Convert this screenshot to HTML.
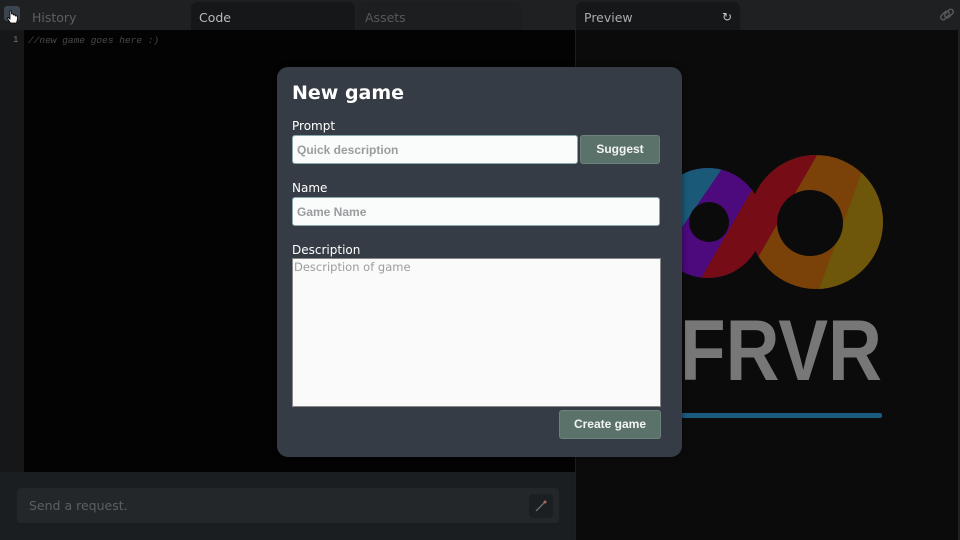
<!DOCTYPE html>
<html><head><meta charset="utf-8"><style>
*{box-sizing:border-box;margin:0;padding:0}
body{width:960px;height:540px;overflow:hidden;background:#1e1f21;font-family:"Liberation Sans","DejaVu Sans",sans-serif;position:relative}
.abs{position:absolute}
.tab{position:absolute;top:2px;height:28px;border-radius:6px 6px 0 0;font-size:12.5px;padding:8px 0 0 8px;font-family:"DejaVu Sans",sans-serif}
</style></head><body>
<div class="abs" style="left:0;top:0;width:960px;height:30px;background:#1f2022"></div>
<div class="abs" style="left:4px;top:6px;width:16px;height:15px;background:#3a4550;border-radius:3px"></div>
<svg class="abs" style="left:7px;top:10px" width="12" height="14"><path d="M3 1 v8 l-1.5-1.5 l-1 1 l3 4.5 h6 l1-4 v-3 h-2 v-1 h-2 v-1 h-2 v-3 z" fill="#fff" stroke="#000" stroke-width="0.8"/></svg>
<div class="tab" style="left:24px;width:165px;color:#5b5f63;background:#1f2022">History</div>
<div class="tab" style="left:191px;width:164px;color:#b9bcbf;background:#151719">Code</div>
<div class="tab" style="left:357px;width:165px;color:#55595d;background:#1c1e20">Assets</div>
<div class="tab" style="left:576px;width:164px;color:#a9acb0;background:#151719">Preview<span style="position:absolute;right:8px;top:8px;font-size:12px;color:#c8c8c8">↻</span></div>
<svg class="abs" style="left:938px;top:6px" width="18" height="18" viewBox="0 0 18 18"><g fill="none" stroke="#55585c" stroke-width="1.5"><rect x="2" y="7" width="10" height="5" rx="2.5" transform="rotate(-45 7 9.5)"/><rect x="6" y="5" width="10" height="5" rx="2.5" transform="rotate(-45 11 7.5)"/></g></svg>
<div class="abs" style="left:0;top:30px;width:24px;height:442px;background:#151719"></div>
<div class="abs" style="left:24px;top:30px;width:551px;height:442px;background:#030303"></div>
<div class="abs" style="left:13px;top:35px;font-size:9px;color:#777;font-family:'Liberation Mono',monospace">1</div>
<div class="abs" style="left:28px;top:35px;font-size:9.5px;color:#4a4a4a;font-style:italic;font-family:'Liberation Mono',monospace">//new game goes here :)</div>
<div class="abs" style="left:0;top:472px;width:575px;height:68px;background:#1a1e21"></div>
<div class="abs" style="left:17px;top:488px;width:542px;height:35px;background:#24272a;border-radius:4px"></div>
<div class="abs" style="left:29px;top:498px;font-size:12.5px;color:#5b5f63;font-family:'DejaVu Sans',sans-serif">Send a request.</div>
<div class="abs" style="left:529px;top:494px;width:24px;height:24px;background:#1c1f21;border-radius:4px"></div>
<svg class="abs" style="left:533px;top:498px" width="16" height="16"><path d="M3 13 L13 3" stroke="#777" stroke-width="1.2"/><circle cx="12" cy="4" r="1.5" fill="#a66"/></svg>
<div class="abs" style="left:575px;top:30px;width:383px;height:510px;background:#0b0b0b;border-left:1px solid #1d1f21"></div>
<div class="abs" style="left:958px;top:30px;width:2px;height:510px;background:#1e2022"></div>
<svg class="abs" style="left:575px;top:30px" width="383" height="510" viewBox="575 30 383 510">
<defs>
<clipPath id="L"><circle cx="708" cy="223" r="55"/></clipPath>
<clipPath id="R"><circle cx="816" cy="222" r="67"/></clipPath>
<clipPath id="U"><circle cx="708" cy="223" r="55"/><circle cx="816" cy="222" r="67"/></clipPath>
</defs>
<circle cx="708" cy="223" r="55" fill="#4c0a7c"/>
<g clip-path="url(#L)"><polygon points="640,160 728,160 680,230 640,240" fill="#1a5a78"/></g>
<circle cx="816" cy="222" r="67" fill="#7a4208"/>
<g clip-path="url(#R)"><polygon points="870,150 900,150 900,300 815,300" fill="#6e560a"/></g>
<g clip-path="url(#U)"><polygon points="775,150 820,150 745,280 700,280" fill="#760c16"/></g>
<circle cx="709" cy="222" r="20" fill="#0b0b0b"/>
<circle cx="810" cy="223" r="33" fill="#0b0b0b"/>
<text x="680" y="380" font-family="Liberation Sans" font-weight="bold" font-size="86" fill="#777" textLength="202" lengthAdjust="spacingAndGlyphs">FRVR</text>
<rect x="678" y="413" width="204" height="5" rx="2" fill="#1a5c80"/>
</svg>
<div class="abs" style="left:277px;top:67px;width:405px;height:390px;background:#363c45;border-radius:11px;box-shadow:0 0 6px rgba(0,0,0,.5)"></div>
<div class="abs" style="left:292px;top:82px;font-size:19px;font-weight:bold;color:#fff;font-family:'DejaVu Sans',sans-serif">New game</div>
<div class="abs" style="left:292px;top:119px;font-size:12px;color:#fff;font-family:'DejaVu Sans',sans-serif">Prompt</div>
<div class="abs" style="left:292px;top:135px;width:286px;height:29px;background:#fafbfb;border-radius:3px;border:1px solid #8aa;"></div>
<div class="abs" style="left:297px;top:143px;font-size:12px;font-weight:bold;color:#9a9c9e">Quick description</div>
<div class="abs" style="left:580px;top:135px;width:80px;height:29px;background:#5b726b;border-radius:3px;border:1px solid #6d827c;color:#f2f4f3;font-size:12px;font-weight:bold;text-align:center;line-height:27px">Suggest</div>
<div class="abs" style="left:292px;top:181px;font-size:12px;color:#fff;font-family:'DejaVu Sans',sans-serif">Name</div>
<div class="abs" style="left:292px;top:197px;width:368px;height:29px;background:#fafbfb;border-radius:3px;border:1px solid #8aa"></div>
<div class="abs" style="left:297px;top:205px;font-size:12px;font-weight:bold;color:#9a9c9e">Game Name</div>
<div class="abs" style="left:292px;top:243px;font-size:12px;color:#fff;font-family:'DejaVu Sans',sans-serif">Description</div>
<div class="abs" style="left:292px;top:258px;width:369px;height:149px;background:#fafafa;border:1px solid #888"></div>
<div class="abs" style="left:294px;top:260px;font-size:11.5px;color:#9a9c9e;font-family:'DejaVu Sans',sans-serif">Description of game</div>
<div class="abs" style="left:559px;top:410px;width:102px;height:29px;background:#5b726b;border-radius:3px;border:1px solid #6d827c;color:#f2f4f3;font-size:12px;font-weight:bold;text-align:center;line-height:27px">Create game</div>
</body></html>
